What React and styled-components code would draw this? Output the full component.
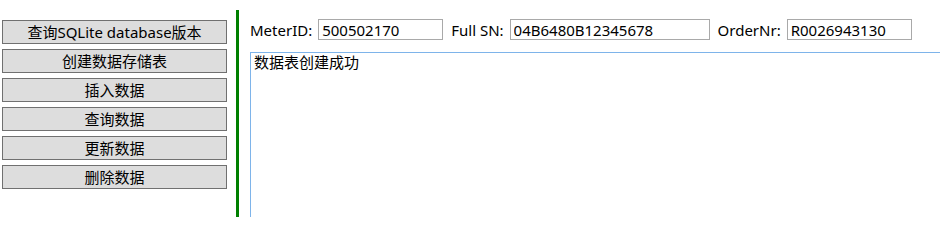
import React from "react";
import styled, { createGlobalStyle } from "styled-components";

const GlobalStyle = createGlobalStyle`
  html, body {
    margin: 0;
    padding: 0;
    background: #ffffff;
    overflow: hidden;
  }
  body {
    font-family: "Noto Sans", "Noto Sans CJK SC", sans-serif;
    font-size: 15px;
    color: #000000;
  }
`;

const actions = [
  "查询SQLite database版本",
  "创建数据存储表",
  "插入数据",
  "查询数据",
  "更新数据",
  "删除数据",
];

const App = () => {
  return (
    <Page>
      <GlobalStyle />
      <SideBar>
        {actions.map((a) => (
          <ActionButton key={a}>{a}</ActionButton>
        ))}
      </SideBar>
      <Main>
        <FieldRow>
          <Label>MeterID:</Label>
          <Field width={125} defaultValue="500502170" />
          <Label>Full SN:</Label>
          <Field width={200} defaultValue="04B6480B12345678" />
          <Label>OrderNr:</Label>
          <Field width={125} defaultValue="R0026943130" />
        </FieldRow>
        <Output readOnly defaultValue="数据表创建成功" />
      </Main>
    </Page>
  );
};

export default App;

const Page = styled.div`
  display: flex;
  width: 940px;
  height: 217px;
`;

const SideBar = styled.div`
  width: 234px;
  padding: 20px 0 0 2px;
  display: flex;
  flex-direction: column;
  gap: 5px;
`;

const ActionButton = styled.button`
  width: 225px;
  height: 24px;
  margin: 0;
  padding: 0;
  background: #dddddd;
  border: 1px solid #707070;
  font-family: "Noto Sans", "Noto Sans CJK SC", sans-serif;
  font-size: 15px;
  color: #000000;
  line-height: 20px;
  text-align: center;
`;

const Main = styled.div`
  flex: 1;
  margin-top: 10px;
  border-left: 3px solid #008000;
  padding: 9px 0 0 11px;
  display: flex;
  flex-direction: column;
  gap: 12px;
  min-width: 0;
`;

const FieldRow = styled.div`
  display: flex;
  align-items: center;
  height: 21px;
`;

const Label = styled.span`
  font-size: 15px;
  margin-right: 6px;
  white-space: nowrap;
`;

const Field = styled.input`
  box-sizing: border-box;
  width: ${(p) => p.width}px;
  height: 21px;
  margin: 0 8px 0 0;
  padding: 0 3px;
  border: 1px solid #a9a9a9;
  font-family: "Noto Sans", "Noto Sans CJK SC", sans-serif;
  font-size: 15px;
  color: #000000;
  outline: none;
`;

const Output = styled.textarea`
  flex: 1;
  box-sizing: border-box;
  width: 100%;
  margin: 0;
  border: 1px solid #7eb4ea;
  border-right: none;
  border-bottom: none;
  padding: 0 3px;
  resize: none;
  outline: none;
  font-family: "Noto Sans", "Noto Sans CJK SC", sans-serif;
  font-size: 15px;
  line-height: 19px;
  color: #000000;
`;
